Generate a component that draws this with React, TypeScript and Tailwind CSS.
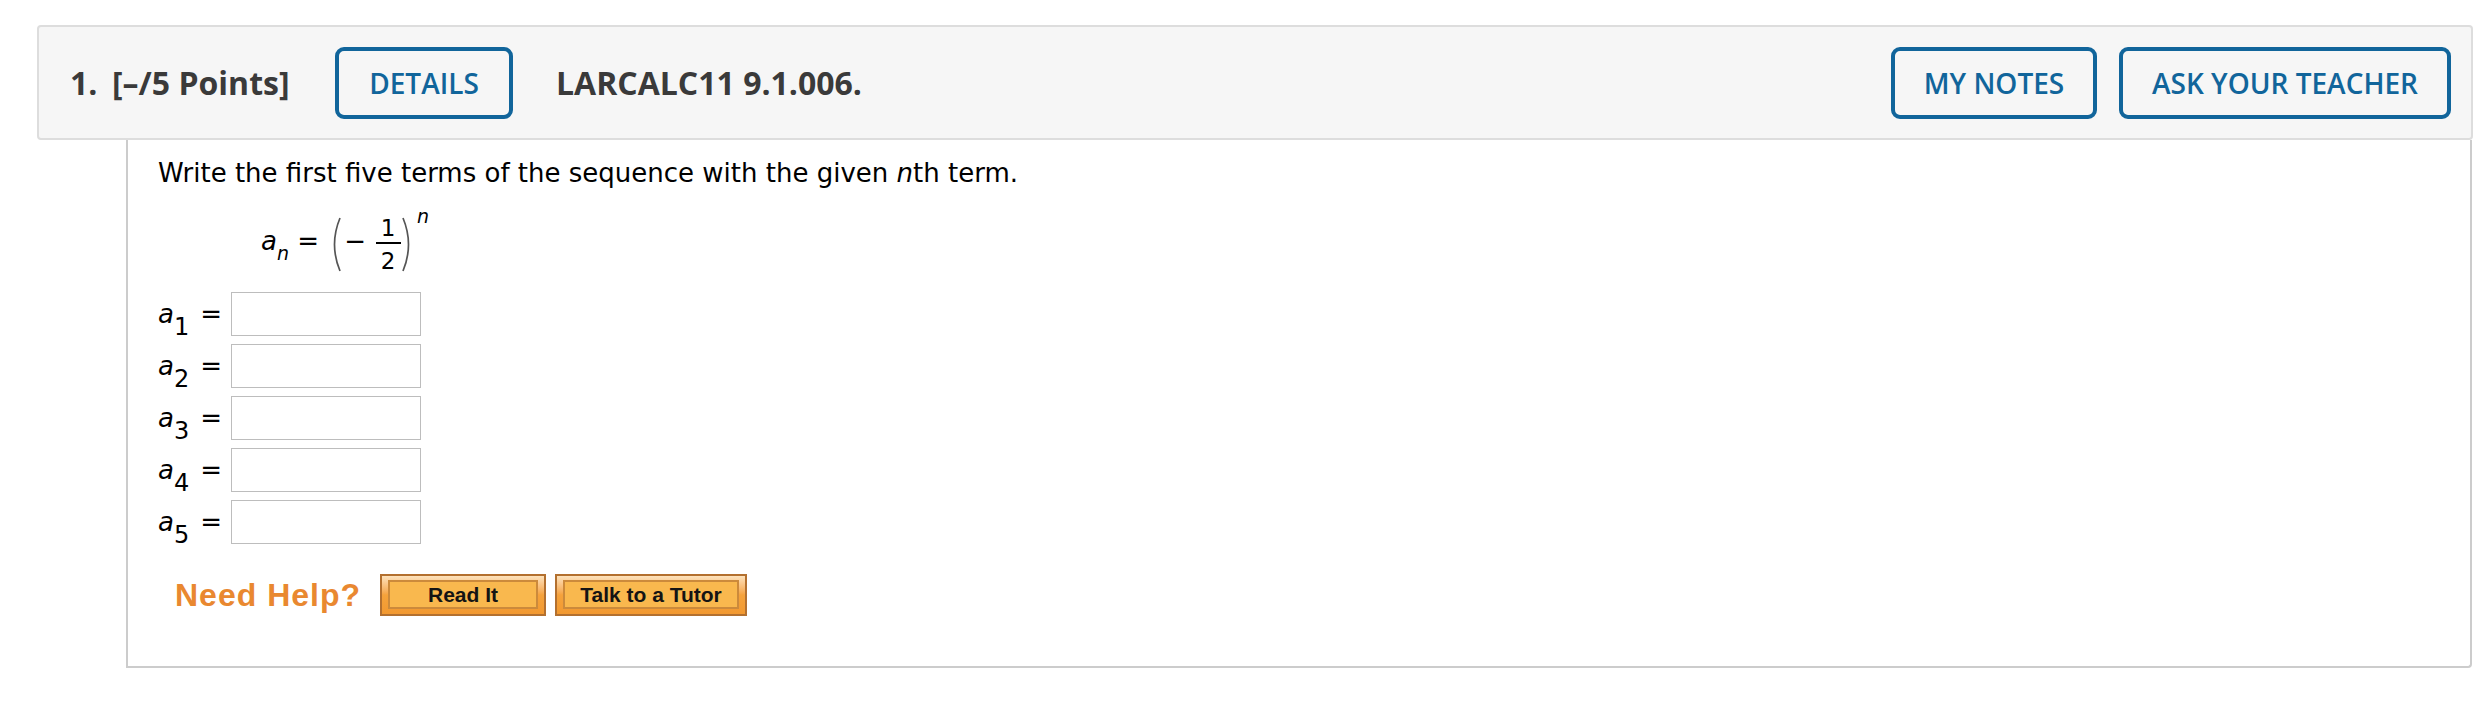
import React from "react";

const verdana = { fontFamily: '"DejaVu Sans", Verdana, sans-serif' };

const Paren = ({ side }: { side: "left" | "right" }) => (
  <svg width="14" height="55" viewBox="0 0 14 55" className="shrink-0">
    {side === "left" ? (
      <path d="M12 1 Q1 27.5 12 54" fill="none" stroke="#555" strokeWidth="1.7" />
    ) : (
      <path d="M2 1 Q13 27.5 2 54" fill="none" stroke="#555" strokeWidth="1.7" />
    )}
  </svg>
);

const HeaderButton = ({ label, width }: { label: string; width: string }) => (
  <button
    className={`${width} h-[72px] shrink-0 rounded-[9px] border-4 border-[#11659b] bg-transparent text-[28px] font-semibold text-[#11659b]`}
  >
    {label}
  </button>
);

const HelpButton = ({ label, width }: { label: string; width: string }) => (
  <div
    className={`${width} h-[42px] shrink-0 border-2 border-[#b3702f] bg-gradient-to-b from-[#fde2bb] via-[#f5a23b] to-[#f29930] px-[6px] pt-[4px] pb-[5px]`}
  >
    <div className="flex h-full items-center justify-center border-2 border-[#cc8a3b] bg-[#f9b84e] text-[21px] font-bold text-[#141414]">
      {label}
    </div>
  </div>
);

const terms = ["1", "2", "3", "4", "5"];

export default function App() {
  return (
    <div className="h-[704px] w-[2478px] overflow-hidden bg-white pl-[37px] pt-[25px]">
      {/* question header */}
      <div
        className="flex h-[115px] w-[2436px] items-center rounded-[4px] border-2 border-[#dddddd] bg-[#f6f6f6] pl-[31px] pr-[20px] text-[#3a3a3a]"
        style={{ fontFamily: '"Open Sans", sans-serif' }}
      >
        <span className="w-[42px] shrink-0 text-[32px] font-bold">1.</span>
        <span className="w-[223px] shrink-0 text-[32px] font-bold">[–/5 Points]</span>
        <HeaderButton label="DETAILS" width="w-[178px]" />
        <span className="ml-[43px] text-[32px] font-bold">LARCALC11 9.1.006.</span>
        <div className="flex-1" />
        <HeaderButton label="MY NOTES" width="w-[206px]" />
        <div className="w-[22px]" />
        <HeaderButton label="ASK YOUR TEACHER" width="w-[332px]" />
      </div>

      {/* question body */}
      <div
        className="ml-[89px] h-[528px] w-[2346px] rounded-br-[4px] border-b-2 border-l-2 border-r-2 border-[#cccccc] pl-[30px] pt-[18px] text-black"
        style={verdana}
      >
        <p className="text-[26px] leading-[30px]">
          Write the first five terms of the sequence with the given <i>n</i>th term.
        </p>

        {/* formula */}
        <div className="ml-[103px] mt-[17px] flex h-[70px] items-start text-[26px]">
          <span className="mt-[23px] whitespace-pre leading-[26px]">
            <i>a</i>
            <i className="relative top-[10px] text-[19px]">n</i>
            {" = "}
          </span>
          <div className="ml-[1px] mt-[12px]">
            <Paren side="left" />
          </div>
          <span className="ml-[2px] mt-[23px] leading-[26px]">−</span>
          <div className="ml-[9px] mt-[12px] flex w-[26px] flex-col items-center">
            <span className="text-[23px] leading-[23px]">1</span>
            <div className="mt-[2px] h-[2px] w-[25px] bg-black" />
            <span className="mt-[6px] text-[23px] leading-[23px]">2</span>
          </div>
          <div className="mt-[12px]">
            <Paren side="right" />
          </div>
          <i className="ml-[2px] mt-[2px] text-[19px] leading-[19px]">n</i>
        </div>

        {/* answer rows */}
        <div className="mt-[17px] flex flex-col gap-[8px]">
          {terms.map((k) => (
            <div key={k} className="flex h-[44px] items-start">
              <span className="mt-[9px] w-[73px] shrink-0 whitespace-pre text-[26px] leading-[26px]">
                <i>a</i>
                <span className="relative top-[12px] text-[24px]">{k}</span>
                <span className="ml-[11px]">=</span>
              </span>
              <input
                type="text"
                className="h-[44px] w-[190px] border border-[#bdbdbd] bg-white outline-none"
              />
            </div>
          ))}
        </div>

        {/* help row */}
        <div
          className="ml-[17px] mt-[30px] flex h-[42px] items-center"
          style={{ fontFamily: '"Liberation Sans", Arial, sans-serif' }}
        >
          <span className="w-[205px] shrink-0 text-[32px] font-bold tracking-[1px] text-[#e98830]">
            Need Help?
          </span>
          <HelpButton label="Read It" width="w-[166px]" />
          <div className="ml-[9px]">
            <HelpButton label="Talk to a Tutor" width="w-[192px]" />
          </div>
        </div>
      </div>
    </div>
  );
}
